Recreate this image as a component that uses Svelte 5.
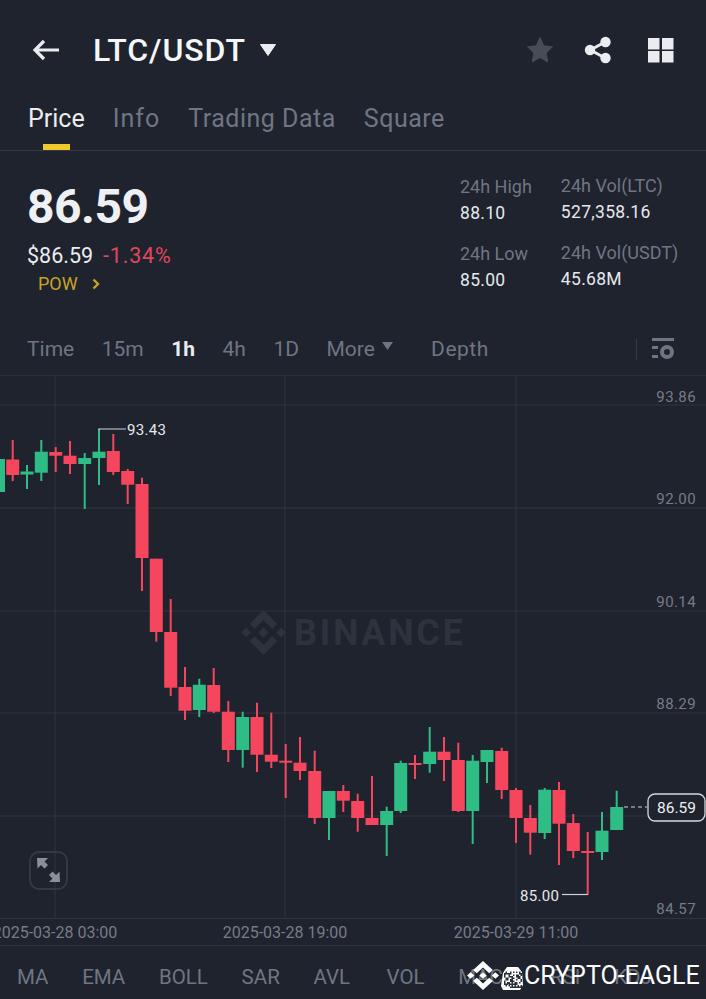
<script>
	// [x, wickTop, bodyTop, bodyBottom, wickBottom, up]
	const candles = [
		[-1.5, 456, 459, 492, 492, 1],
		[12.7, 440, 459.5, 475, 481, 0],
		[27, 465, 471.5, 474.5, 489, 1],
		[41.3, 440, 451.7, 472.7, 481, 1],
		[55.7, 447, 452, 455.7, 472, 0],
		[70, 441, 455.7, 464, 474, 0],
		[84.7, 453, 458, 464, 509, 1],
		[99, 429, 451.7, 458, 485, 1],
		[113.3, 434, 451, 472, 475, 0],
		[127.7, 469, 471, 484.7, 504, 0],
		[142, 477.7, 484, 558, 591, 0],
		[156.3, 558.7, 558.7, 632, 641.7, 0],
		[170.7, 599, 632, 687.7, 696, 0],
		[185, 667, 687, 710.7, 720, 0],
		[199.3, 678.7, 684.7, 710, 717, 1],
		[213.7, 668, 685, 711.7, 713, 0],
		[228.3, 701, 711.7, 750, 762, 0],
		[242.7, 711.7, 717, 750, 767.7, 1],
		[257, 702.7, 717, 754.7, 772, 0],
		[271.3, 712.7, 754.7, 761.7, 768, 0],
		[285.7, 744, 760.7, 762.7, 798, 0],
		[300, 737, 762.7, 771, 780, 0],
		[314.7, 750.7, 771, 818, 824, 0],
		[329, 791, 791, 818, 840, 1],
		[343.3, 785, 791, 800.7, 812, 0],
		[357.7, 793.7, 801, 818, 831.7, 0],
		[372, 776, 818, 825, 825, 0],
		[386.7, 806.7, 811, 825, 856, 1],
		[400.7, 760.7, 763, 811, 813, 1],
		[415, 755, 763, 765, 779, 0],
		[429.7, 727, 751.7, 764, 772.7, 1],
		[444, 737, 751.7, 760, 781, 0],
		[458.3, 742.7, 760, 811, 812, 0],
		[472.7, 755, 760.7, 811, 844, 1],
		[487, 750, 750, 762, 783, 1],
		[501.7, 747.7, 751, 790, 799, 0],
		[516, 788, 790, 818, 843, 0],
		[530.3, 805, 818, 832.7, 854.7, 0],
		[544.7, 788, 789.7, 833, 839, 1],
		[559, 782, 790, 823.7, 865, 0],
		[573.3, 814, 823, 851, 858, 0],
		[587.7, 832, 851, 853, 895, 0],
		[602, 812, 830.7, 852, 860, 1],
		[616.7, 790.7, 807, 830, 830, 1]
	];
	const gridY = [405, 508, 611, 713, 816];
	const gridX = [55, 285, 516];
	const prices = [
		['93.86', 402],
		['92.00', 504],
		['90.14', 607],
		['88.29', 709],
		['84.57', 914]
	];
	const times = [
		['2025-03-28 03:00', 55],
		['2025-03-28 19:00', 285],
		['2025-03-29 11:00', 516]
	];
	const intervals = ['15m', '1h', '4h', '1D'];
	const indicators = ['VOL', 'MACD', 'RSI', 'KDJ'];

	// the stamp's small portrait is a noisy halftone, dark specks on white
	let specks = '';
	for (let y = 3; y < 21; y += 1.5) {
		for (let x = 3; x < 20; x += 1.5) {
			if ((x * 7 + y * 13 + x * y) % 5 < 2.2) specks += `M${x} ${y}h1.5v1.5h-1.5z`;
		}
	}
</script>

{#snippet binanceLogo()}
	<path d="M38.73 53.2l24.59-24.58 24.6 24.6 14.3-14.31L63.32 0 24.43 38.9z" />
	<path d="M0 63.31l14.3-14.31 14.31 14.31-14.31 14.3z" />
	<path d="M38.73 73.41L63.32 98l24.6-24.6 14.31 14.29-38.9 38.91-38.91-38.88z" />
	<path d="M98 63.31l14.3-14.31 14.31 14.3-14.31 14.32z" />
	<path d="M77.83 63.3L63.32 48.78 52.59 59.51l-1.24 1.23-2.54 2.54 14.51 14.5 14.51-14.52z" />
{/snippet}

<div class="page">
	<header class="top">
		<svg class="back" width="30" height="24" viewBox="0 0 30 24">
			<path d="M28 12H4M13 3l-9 9 9 9" fill="none" stroke="#eaecef" stroke-width="3.2" />
		</svg>
		<h1>LTC/USDT</h1>
		<svg class="caret" width="18" height="14" viewBox="0 0 18 14">
			<path d="M1.5 1.5h15L9 12.5z" fill="#eaecef" stroke="#eaecef" stroke-linejoin="round" />
		</svg>
		<div class="actions">
			<svg width="28" height="28" viewBox="0 0 28 28">
				<path
					d="M14 1.5l3.8 8.3 8.7 1-6.4 6.2 1.7 9-7.8-4.5-7.8 4.5 1.7-9-6.4-6.2 8.7-1z"
					fill="#474d57"
					stroke="#474d57"
					stroke-linejoin="round"
				/>
			</svg>
			<svg width="28" height="28" viewBox="0 0 28 28">
				<path d="M21 6L6.500 14 21 22" fill="none" stroke="#eaecef" stroke-width="3" />
				<circle cx="21.500" cy="6" r="5.200" fill="#eaecef" />
				<circle cx="6" cy="14" r="5.200" fill="#eaecef" />
				<circle cx="21.500" cy="22" r="5.200" fill="#eaecef" />
			</svg>
			<svg class="apps" width="26" height="26" viewBox="0 0 26 26">
				<path d="M0 1h11.500v11.500H0zM14 1h11.500v11.500H14zM0 14h11.500v11.500H0zM14 14h11.500v11.500H14z" fill="#eaecef" />
			</svg>
		</div>
	</header>

	<nav class="tabs">
		<span class="tab on">Price</span>
		<span class="tab info">Info</span>
		<span class="tab">Trading Data</span>
		<span class="tab">Square</span>
	</nav>

	<section class="summary">
		<div class="quote">
			<div class="last">86.59</div>
			<div class="sub"><span>$86.59</span><span class="down">-1.34%</span></div>
			<div class="tag">POW
				<svg width="8" height="12" viewBox="0 0 8 12"><path d="M1.500 1.500L6 6l-4.500 4.500" fill="none" stroke="#c9a227" stroke-width="2.400" /></svg>
			</div>
		</div>
		<div class="stats">
			<div class="col">
				<div class="stat"><label>24h High</label><b>88.10</b></div>
				<div class="stat"><label>24h Low</label><b>85.00</b></div>
			</div>
			<div class="col vols">
				<div class="stat"><label>24h Vol(LTC)</label><b>527,358.16</b></div>
				<div class="stat"><label>24h Vol(USDT)</label><b>45.68M</b></div>
			</div>
		</div>
	</section>

	<div class="periods">
		<span>Time</span>
		{#each intervals as p}
			<span class:active={p === '1h'}>{p}</span>
		{/each}
		<span class="more">More
			<svg width="11" height="9" viewBox="0 0 12 10"><path d="M0 0h12L6 9z" fill="#6f7682" /></svg>
		</span>
		<span class="depth">Depth</span>
		<em class="divider"></em>
		<svg class="settings" width="22" height="22" viewBox="0 0 22 22">
			<path d="M0 0h22v3H0zM0 8h6v3H0zM0 17h6v3H0z" fill="#6f7682" />
			<circle cx="15" cy="14" r="5" fill="none" stroke="#6f7682" stroke-width="4" />
		</svg>
	</div>

	<svg class="chart" width="706" height="570" viewBox="0 376 706 570">
		{#each gridY as y}
			<line x1="0" x2="706" y1={y} y2={y} class="grid" />
		{/each}
		{#each gridX as x}
			<line x1={x} x2={x} y1="376" y2="918" class="grid" />
		{/each}
		<line x1="0" x2="706" y1="918.500" y2="918.500" class="grid" />

		<svg x="241" y="610" width="45" height="45" viewBox="0 0 126.610 126.610" fill="#2d323c">
			{@render binanceLogo()}
		</svg>
		<text x="294" y="645" class="mark">BINANCE</text>

		{#each candles as [x, wt, bt, bb, wb, up]}
			<g fill={up ? '#2ebd85' : '#f6465d'}>
				<rect x={x - 1} y={wt} width="2" height={wb - wt} />
				<rect x={x - 6.500} y={bt} width="13" height={Math.max(bb - bt, 2)} />
			</g>
		{/each}

		<path d="M99 430V429H126" fill="none" stroke="#cfd2d6" stroke-width="1.200" />
		<text x="127" y="435" class="hl">93.43</text>
		<path d="M562 894.500H587.700" fill="none" stroke="#cfd2d6" stroke-width="1.200" />
		<text x="520" y="901" class="hl">85.00</text>

		{#each prices as [label, y]}
			<text x="696" {y} class="axis price" text-anchor="end">{label}</text>
		{/each}

		<line x1="624" x2="647" y1="807" y2="807" stroke="#cfd2d6" stroke-dasharray="4 3" />
		<rect x="648" y="794" width="57" height="27" rx="7" fill="#1e232e" stroke="#d5d7da" stroke-width="1.300" />
		<text x="676.500" y="813" class="now" text-anchor="middle">86.59</text>

		<rect x="30" y="852" width="37" height="37" rx="9" fill="none" stroke="#333945" stroke-width="2" />
		<path d="M37 858h11l-3.500 3.500 3.500 3.500-3.500 3.500-3.500-3.500-3.500 3.500z" fill="#8a8f98" />
		<path d="M60 882H49l3.500-3.500-3.500-3.500 3.500-3.500 3.500 3.500 3.500-3.500z" fill="#8a8f98" />

		<line x1="0" x2="706" y1="945.500" y2="945.500" class="grid" />
		{#each times as [label, x]}
			<text {x} y="938" class="axis time" text-anchor="middle">{label}</text>
		{/each}
	</svg>

	<div class="indicators">
		<span>MA</span>
		<span>EMA</span>
		<span>BOLL</span>
		<span>SAR</span>
		<span>AVL</span>
		<em class="divider"></em>
		{#each indicators as name}
			<span>{name}</span>
		{/each}
		<svg class="side" width="20" height="17" viewBox="0 0 20 17"><path d="M0 0h20v17H0z" fill="#5c626d" /></svg>
	</div>

	<div class="stamp">
		<svg width="32" height="29" viewBox="0 0 126.610 126.610" preserveAspectRatio="none" fill="#fff">
			{@render binanceLogo()}
		</svg>
		<svg class="portrait" width="22" height="23" viewBox="0 0 22 23">
			<path d="M6 0h11l4 5 1 13-3 5H2l-2-4 2-13z" fill="#fff" />
			<path d={specks} fill="#2a2f38" />
		</svg>
		<span>CRYPTO-EAGLE</span>
	</div>
</div>

<style>
	:global(body) {
		margin: 0;
		background: #1e232e;
	}
	.page {
		position: relative;
		width: 706px;
		height: 999px;
		overflow: hidden;
		background: #1e232e;
		color: #eaecef;
		font-family: Roboto, 'Liberation Sans', sans-serif;
	}
	.top {
		display: flex;
		align-items: center;
		height: 100px;
		padding: 0 32px 0 31px;
		box-sizing: border-box;
	}
	.back {
		margin-right: 32px;
	}
	h1 {
		margin: 0 13px 0 0;
		font-size: 32px;
		font-weight: 500;
		letter-spacing: 0.9px;
		color: #f5f6f7;
	}
	.actions {
		display: flex;
		align-items: center;
		gap: 30px;
		margin-left: auto;
	}
	.apps {
		margin-left: 6px;
	}
	.tabs {
		display: flex;
		gap: 28px;
		height: 51px;
		padding: 4px 0 0 28px;
		box-sizing: border-box;
		border-bottom: 1px solid #333945;
		font-size: 25px;
		letter-spacing: 0.5px;
		color: #6f7682;
	}
	.tab {
		position: relative;
	}
	.tab.on {
		letter-spacing: 0;
		color: #eaecef;
	}
	.tab.info {
		letter-spacing: 1px;
	}
	.tab.on::after {
		content: '';
		position: absolute;
		left: 15px;
		width: 27px;
		bottom: 0;
		height: 6px;
		background: #f0c92c;
	}
	.summary {
		display: flex;
		justify-content: space-between;
		height: 174px;
		padding: 27px 0 0 27px;
		box-sizing: border-box;
	}
	.last {
		font-size: 48px;
		font-weight: 700;
		line-height: 58px;
		letter-spacing: -0.5px;
		color: #eef0f3;
	}
	.sub {
		display: flex;
		gap: 10px;
		margin-top: 7px;
		font-size: 21.5px;
		line-height: 26px;
	}
	.down {
		letter-spacing: 0.8px;
		color: #e0465c;
	}
	.tag {
		display: flex;
		align-items: center;
		gap: 14px;
		margin: 3px 0 0 11px;
		font-size: 18px;
		line-height: 24px;
		color: #c9a227;
	}
	.stats {
		display: flex;
		gap: 29px;
		width: 246px;
		margin-top: -3px;
	}
	.col {
		display: flex;
		flex-direction: column;
		gap: 19px;
	}
	.vols {
		margin-top: -1px;
	}
	.stat {
		display: flex;
		flex-direction: column;
		gap: 4px;
	}
	.stat label {
		font-size: 18px;
		line-height: 24px;
		color: #6f7682;
	}
	.stat b {
		font-size: 17.5px;
		font-weight: 400;
		line-height: 20px;
		letter-spacing: 0.3px;
		color: #e6e8ec;
	}
	.periods {
		display: flex;
		align-items: center;
		gap: 27.5px;
		height: 51px;
		padding: 0 32px 2px 27px;
		box-sizing: border-box;
		border-bottom: 1px solid #2b303a;
		font-size: 21px;
		color: #6f7682;
	}
	.active {
		font-weight: 700;
		color: #eaecef;
	}
	.more svg {
		margin: 0 0 5px 2px;
	}
	.depth {
		margin-left: 10.5px;
		letter-spacing: 0.5px;
	}
	.divider {
		width: 1px;
		height: 21px;
		background: #333945;
	}
	.periods .divider {
		margin-left: auto;
		margin-right: -12px;
	}
	.chart {
		display: block;
	}
	.grid {
		stroke: #2f343f;
		stroke-width: 1;
	}
	.mark {
		font-size: 36px;
		font-weight: 700;
		letter-spacing: 2.7px;
		fill: #2d323c;
	}
	.hl {
		font-size: 15px;
		letter-spacing: 0.3px;
		fill: #e6e8ec;
	}
	.axis {
		font-size: 15px;
		fill: #767c86;
	}
	.price {
		letter-spacing: 0.4px;
	}
	.time {
		font-size: 16px;
	}
	.now {
		font-size: 15.5px;
		fill: #f0f1f3;
	}
	.indicators {
		display: flex;
		align-items: center;
		gap: 33.7px;
		height: 53px;
		padding: 8px 34px 0 17px;
		box-sizing: border-box;
		font-size: 20.5px;
		color: #6f7682;
	}
	.indicators .divider {
		margin: 0 -15.5px;
	}
	.side {
		margin-left: auto;
	}
	.stamp {
		position: absolute;
		left: 467px;
		top: 961px;
		display: flex;
		align-items: center;
		gap: 2px;
		color: #fff;
		font-size: 25px;
		line-height: 29px;
	}
	.stamp span {
		margin-left: -1px;
	}
	.portrait {
		margin: 5px 0 0;
	}
</style>
